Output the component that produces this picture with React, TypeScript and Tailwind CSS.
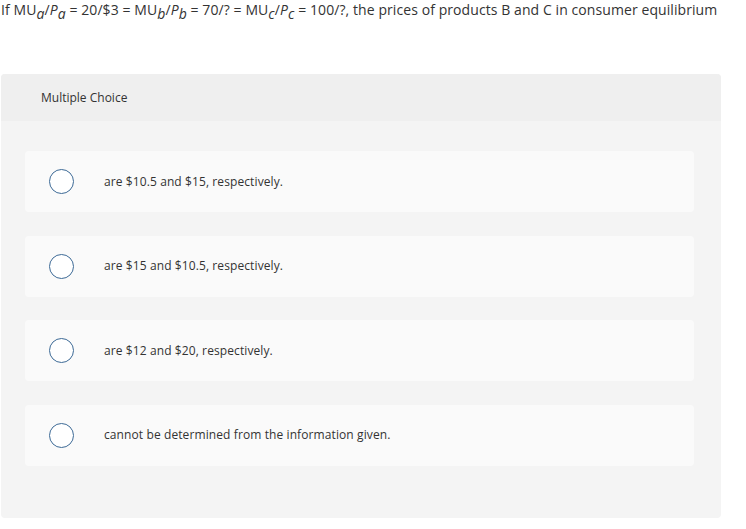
const options = [
  'are $10.5 and $15, respectively.',
  'are $15 and $10.5, respectively.',
  'are $12 and $20, respectively.',
  'cannot be determined from the information given.',
]

function Sub({ children }: { children: string }) {
  return <sub className="italic text-[14px] leading-none">{children}</sub>
}

export default function App() {
  return (
    <div className="w-[746px] h-[529px] bg-white text-[#333] font-['Open_Sans','Liberation_Sans',sans-serif]">
      <p className="pl-[1px] pt-[1px] text-[14px] leading-[18px] whitespace-nowrap tracking-[0.08px]">
        If MU<Sub>a</Sub>/<i>P</i>
        <Sub>a</Sub> = 20/$3 = MU<Sub>b</Sub>/<i>P</i>
        <Sub>b</Sub> = 70/? = MU<Sub>c</Sub>/<i>P</i>
        <Sub>c</Sub> = 100/?, the prices of products B and C in consumer equilibrium
      </p>

      <div className="ml-[1px] mt-[55px] w-[720px] h-[444px] rounded bg-[#f4f4f4] overflow-hidden">
        <div className="h-[47px] bg-[#efefef] pl-[40px] flex items-center text-[12px]">
          Multiple Choice
        </div>
        <div className="pl-[24px] pr-[27px] pt-[30px] flex flex-col gap-[23.5px]">
          {options.map((opt) => (
            <div key={opt} className="h-[61px] rounded bg-[#fafafa] flex items-center">
              <span className="ml-[24px] w-[25px] h-[25px] rounded-full border-[1.5px] border-[#3d6a96] bg-white shrink-0" />
              <span className="ml-[30px] text-[12px] tracking-[0.1px]">{opt}</span>
            </div>
          ))}
        </div>
      </div>
    </div>
  )
}
